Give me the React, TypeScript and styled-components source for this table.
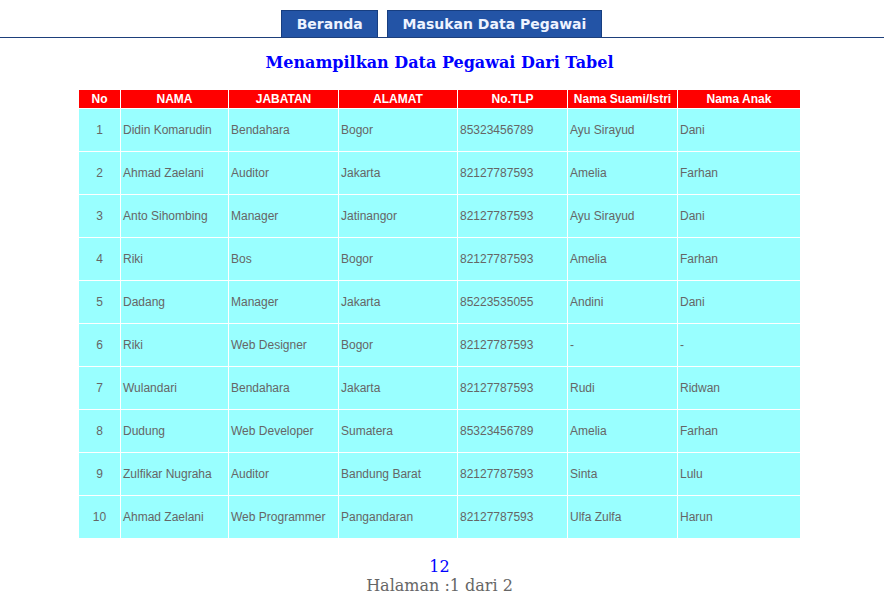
import React from "react";
import styled, { createGlobalStyle } from "styled-components";

const Global = createGlobalStyle`
  html, body { margin: 0; padding: 0; background: #ffffff; }
  body { font-family: "DejaVu Serif", serif; }
`;

const Page = styled.div`
  width: 884px;
`;

const Nav = styled.nav`
  display: flex;
  justify-content: center;
  gap: 9px;
  padding: 10px 0 0 0;
  margin-left: -1px;
  border-bottom: 1px solid #1d3f7b;
`;

const Tab = styled.a`
  display: block;
  height: 26px;
  line-height: 26px;
  padding: 0 14.5px;
  background: #2354a6;
  border: 1px solid #173e80;
  border-bottom: none;
  color: #eef3ff;
  font-family: "DejaVu Sans", sans-serif;
  font-weight: bold;
  font-size: 14px;
  text-decoration: none;
`;

const Title = styled.h2`
  margin: 13px 0 0 0;
  padding-right: 5px;
  text-align: center;
  color: #0000ff;
  font-family: "DejaVu Serif", serif;
  font-weight: bold;
  font-size: 16px;
  line-height: 24px;
`;

const TableWrap = styled.div`
  display: flex;
  justify-content: center;
  padding: 14px 5px 0 0;
`;

const Table = styled.table`
  border-collapse: separate;
  border-spacing: 1px;
  table-layout: fixed;
  width: 723px;
  font-family: "Liberation Sans", Arial, sans-serif;
  font-size: 12px;
`;

const Th = styled.th`
  background: #ff0000;
  color: #ffffff;
  font-weight: bold;
  height: 18px;
  padding: 0;
  text-align: center;
  vertical-align: middle;
`;

const Td = styled.td<{ $center?: boolean }>`
  background: #99ffff;
  color: #666666;
  height: 42px;
  padding: 0 2px;
  text-align: ${(p) => (p.$center ? "center" : "left")};
  vertical-align: middle;
  white-space: nowrap;
  overflow: hidden;
`;

const Pager = styled.div`
  margin-top: 18px;
  padding-right: 5px;
  text-align: center;
  font-family: "DejaVu Serif", serif;
  font-size: 16px;
  line-height: 19px;
`;

const PageLink = styled.a`
  color: #0000ff;
  text-decoration: none;
`;

const PageInfo = styled.div`
  color: #666666;
`;

const cols = [41, 107, 109, 118, 109, 109, 122];
const headers = ["No", "NAMA", "JABATAN", "ALAMAT", "No.TLP", "Nama Suami/Istri", "Nama Anak"];

const rows: string[][] = [
  ["1", "Didin Komarudin", "Bendahara", "Bogor", "85323456789", "Ayu Sirayud", "Dani"],
  ["2", "Ahmad Zaelani", "Auditor", "Jakarta", "82127787593", "Amelia", "Farhan"],
  ["3", "Anto Sihombing", "Manager", "Jatinangor", "82127787593", "Ayu Sirayud", "Dani"],
  ["4", "Riki", "Bos", "Bogor", "82127787593", "Amelia", "Farhan"],
  ["5", "Dadang", "Manager", "Jakarta", "85223535055", "Andini", "Dani"],
  ["6", "Riki", "Web Designer", "Bogor", "82127787593", "-", "-"],
  ["7", "Wulandari", "Bendahara", "Jakarta", "82127787593", "Rudi", "Ridwan"],
  ["8", "Dudung", "Web Developer", "Sumatera", "85323456789", "Amelia", "Farhan"],
  ["9", "Zulfikar Nugraha", "Auditor", "Bandung Barat", "82127787593", "Sinta", "Lulu"],
  ["10", "Ahmad Zaelani", "Web Programmer", "Pangandaran", "82127787593", "Ulfa Zulfa", "Harun"],
];

export default function App() {
  return (
    <Page>
      <Global />
      <Nav>
        <Tab href="#">Beranda</Tab>
        <Tab href="#">Masukan Data Pegawai</Tab>
      </Nav>
      <Title>Menampilkan Data Pegawai Dari Tabel</Title>
      <TableWrap>
        <Table>
          <colgroup>
            {cols.map((w, i) => (
              <col key={i} style={{ width: w }} />
            ))}
          </colgroup>
          <thead>
            <tr>
              {headers.map((h) => (
                <Th key={h}>{h}</Th>
              ))}
            </tr>
          </thead>
          <tbody>
            {rows.map((r) => (
              <tr key={r[0]}>
                {r.map((c, i) => (
                  <Td key={i} $center={i === 0}>
                    {c}
                  </Td>
                ))}
              </tr>
            ))}
          </tbody>
        </Table>
      </TableWrap>
      <Pager>
        <PageLink href="#">1</PageLink>
        <PageLink href="#">2</PageLink>
        <PageInfo>Halaman :1 dari 2</PageInfo>
      </Pager>
    </Page>
  );
}
